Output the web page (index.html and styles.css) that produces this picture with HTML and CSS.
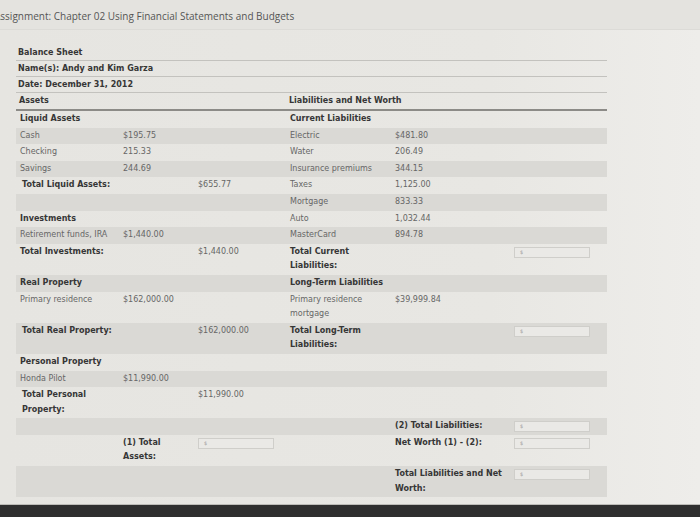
FILE: index.html
```html
<!DOCTYPE html>
<html>
<head>
<meta charset="utf-8">
<link rel="stylesheet" href="styles.css">
</head>
<body>
<header class="title-bar"><span class="title-text">Assignment: Chapter 02 Using Financial Statements and Budgets</span></header>
<main class="content">
<table class="sheet">
<colgroup>
<col class="c1"><col class="c2"><col class="c3"><col class="c4"><col class="c5"><col class="c6">
</colgroup>
<tbody>
<tr class="head"><td colspan="6" class="b">Balance Sheet</td></tr>
<tr class="head"><td colspan="6" class="b">Name(s): Andy and Kim Garza</td></tr>
<tr class="head"><td colspan="6" class="b">Date: December 31, 2012</td></tr>
<tr class="section"><td colspan="3" class="b">Assets</td><td colspan="3" class="b">Liabilities and Net Worth</td></tr>
<tr><td colspan="3" class="b">Liquid Assets</td><td colspan="3" class="b">Current Liabilities</td></tr>
<tr class="alt"><td>Cash</td><td>$195.75</td><td></td><td>Electric</td><td>$481.80</td><td></td></tr>
<tr><td>Checking</td><td>215.33</td><td></td><td>Water</td><td>206.49</td><td></td></tr>
<tr class="alt"><td>Savings</td><td>244.69</td><td></td><td>Insurance premiums</td><td>344.15</td><td></td></tr>
<tr><td colspan="2" class="b total">Total Liquid Assets:</td><td>$655.77</td><td>Taxes</td><td>1,125.00</td><td></td></tr>
<tr class="alt"><td></td><td></td><td></td><td>Mortgage</td><td>833.33</td><td></td></tr>
<tr><td colspan="3" class="b">Investments</td><td>Auto</td><td>1,032.44</td><td></td></tr>
<tr class="alt"><td>Retirement funds, IRA</td><td>$1,440.00</td><td></td><td>MasterCard</td><td>894.78</td><td></td></tr>
<tr><td colspan="2" class="b">Total Investments:</td><td>$1,440.00</td><td class="b">Total Current Liabilities:</td><td></td><td><div class="field">$</div></td></tr>
<tr class="alt"><td colspan="3" class="b">Real Property</td><td colspan="3" class="b">Long-Term Liabilities</td></tr>
<tr><td>Primary residence</td><td>$162,000.00</td><td></td><td>Primary residence mortgage</td><td>$39,999.84</td><td></td></tr>
<tr class="alt"><td colspan="2" class="b total">Total Real Property:</td><td>$162,000.00</td><td class="b">Total Long-Term Liabilities:</td><td></td><td><div class="field">$</div></td></tr>
<tr><td colspan="3" class="b">Personal Property</td><td colspan="3"></td></tr>
<tr class="alt"><td>Honda Pilot</td><td>$11,990.00</td><td></td><td colspan="3"></td></tr>
<tr><td class="b total">Total Personal Property:</td><td></td><td>$11,990.00</td><td colspan="3"></td></tr>
<tr class="alt"><td colspan="3"></td><td></td><td class="b">(2) Total Liabilities:</td><td><div class="field">$</div></td></tr>
<tr><td></td><td class="b">(1) Total Assets:</td><td><div class="field">$</div></td><td></td><td class="b">Net Worth (1) - (2):</td><td><div class="field">$</div></td></tr>
<tr class="alt"><td colspan="3"></td><td></td><td class="b">Total Liabilities and Net Worth:</td><td><div class="field">$</div></td></tr>
</tbody>
</table>
</main>
<footer class="bezel"></footer>
</body>
</html>
```

FILE: styles.css
```css
html, body {
  margin: 0;
  padding: 0;
}
body {
  width: 700px;
  height: 517px;
  overflow: hidden;
  display: flex;
  flex-direction: column;
  background: linear-gradient(to right, #e6e5e1 0%, #e8e7e3 70%, #eeedea 100%);
  font-family: "DejaVu Sans", Verdana, sans-serif;
  color: #666;
}
.title-bar {
  height: 30px;
  flex: none;
  display: flex;
  align-items: center;
  background: #e4e3df;
  border-bottom: 1px solid #dcdbd7;
  box-sizing: border-box;
  overflow: hidden;
}
.title-text {
  font-family: "Open Sans", sans-serif;
  font-size: 10px;
  color: #555;
  margin-left: -6px;
  padding-top: 2px;
  white-space: nowrap;
}
.content {
  flex: 1;
  padding: 15px 0 0 16px;
}
.sheet {
  width: 591px;
  border-collapse: collapse;
  table-layout: fixed;
  font-size: 8px;
}
.c1 { width: 103px; }
.c2 { width: 75px; }
.c3 { width: 92px; }
.c4 { width: 105px; }
.c5 { width: 119px; }
.c6 { width: 97px; }
.sheet td {
  padding: 1px 4px;
  line-height: 14.6px;
  vertical-align: top;
}
.sheet .b {
  font-weight: bold;
  color: #363636;
}
.sheet .total {
  padding-left: 6px;
}
.head td {
  padding: 0 2px;
  line-height: 15px;
  border-bottom: 1px solid #c3c2be;
}
.section td {
  padding: 0 3px;
  line-height: 16px;
  border-bottom: 2px solid #8c8b87;
}
.alt td {
  background: #dad9d5;
}
.field {
  width: 76px;
  height: 11px;
  box-sizing: border-box;
  margin-top: 2px;
  border: 1px solid #cfceca;
  background: #eae9e6;
  font-size: 5px;
  line-height: 9px;
  padding-left: 5px;
  color: #999;
}
.bezel {
  height: 12px;
  flex: none;
  background: #2f2f2f;
  border-top: 1px solid #bdbcb8;
}
```
